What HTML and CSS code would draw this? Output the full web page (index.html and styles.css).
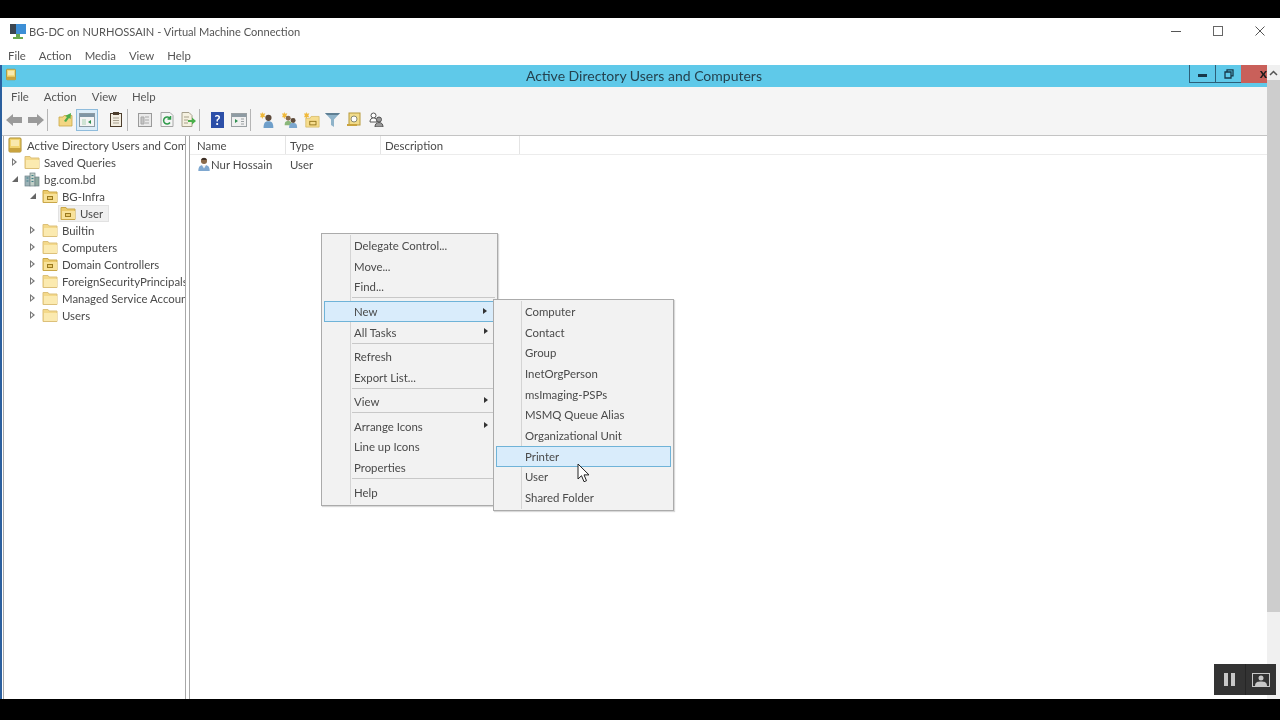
FILE: index.html
```html
<!DOCTYPE html>
<html lang="en">
<head>
    <meta charset="UTF-8">
    <title>BG-DC on NURHOSSAIN - Virtual Machine Connection</title>
    <link rel="stylesheet" href="styles.css">
</head>
<body>
    <svg class="sprite" width="0" height="0">
        <symbol id="folder" viewBox="0 0 16 16">
            <path d="M1 4V2.500h5L7 4h8v10.500H1z" fill="#f4d98a" stroke="#dcc07a" stroke-width="1"/>
            <path d="M2 6h13v8H2z" fill="#fbeab0"/>
        </symbol>
        <symbol id="ou" viewBox="0 0 16 16">
            <path d="M1 4V2.500h5L7 4h8v10.500H1z" fill="#eccb6c" stroke="#c9a748" stroke-width="1"/>
            <path d="M2 6h13v8H2z" fill="#f8e29a"/>
            <rect x="5" y="8" width="6" height="4" fill="#9a7a1f"/>
            <rect x="6" y="9" width="4" height="2" fill="#eccb6c"/>
        </symbol>
        <symbol id="book" viewBox="0 0 16 16">
            <rect x="2" y="1" width="12" height="14" rx="1" fill="#f2d46f" stroke="#a98a2b"/>
            <rect x="2" y="11" width="12" height="4" fill="#c9a33e"/>
            <rect x="4" y="3" width="8" height="6" fill="#f9e9ad"/>
        </symbol>
        <symbol id="domain" viewBox="0 0 16 16">
            <rect x="1" y="5" width="5" height="10" fill="#9db3b8" stroke="#6d8288" stroke-width=".7"/>
            <rect x="6" y="2" width="5" height="13" fill="#c2d0c8" stroke="#6d8288" stroke-width=".7"/>
            <rect x="11" y="6" width="4" height="9" fill="#8fa9a0" stroke="#6d8288" stroke-width=".7"/>
            <path d="M2.500 7h2M2.500 10h2M7.500 4.500h2M7.500 7.500h2M7.500 10.500h2" stroke="#3f7f86"/>
        </symbol>
        <symbol id="user" viewBox="0 0 16 16">
            <path d="M1.500 16c0-5.500 2-7 6.500-7s6.500 1.500 6.500 7z" fill="#7fa8d0"/>
            <path d="M5.500 9l2.500 4 2.500-4z" fill="#f4f4f4"/>
            <circle cx="8" cy="4.500" r="3.500" fill="#8a6a4a"/>
            <path d="M4.800 3.500c.8-3.500 5.600-3.500 6.400 0z" fill="#3d3027"/>
        </symbol>
        <symbol id="staruser" viewBox="0 0 18 18">
            <path d="M2.500 0l1 2 2.500-.5L4.800 4 6 6l-2.400-.3L2.500 8 1.700 5.700 0 6l1-2-1-2.500 1.800.5z" fill="#f0b93a"/>
            <path d="M4 18c0-6 2-7.500 5.500-7.500S15 12 15 18z" fill="#6f9fca"/>
            <circle cx="9.500" cy="6.500" r="3.500" fill="#5e4a3a"/>
        </symbol>
        <symbol id="stargroup" viewBox="0 0 18 18">
            <path d="M2.500 0l1 2 2.500-.5L4.800 4 6 6l-2.400-.3L2.500 8 1.700 5.700 0 6l1-2-1-2.500 1.800.5z" fill="#f0b93a"/>
            <path d="M3 15c0-4 1-5 4-5s4 1 4 5z" fill="#8ab77a"/>
            <path d="M8 18c0-4 1-5.500 4.500-5.500S17 14 17 18z" fill="#7ba7cf"/>
            <circle cx="7" cy="7" r="2.800" fill="#86694c"/>
            <circle cx="12.500" cy="9.500" r="2.800" fill="#5d4a3a"/>
        </symbol>
        <symbol id="starfolder" viewBox="0 0 18 18">
            <path d="M2.500 0l1 2 2.500-.5L4.800 4 6 6l-2.400-.3L2.500 8 1.700 5.700 0 6l1-2-1-2.500 1.800.5z" fill="#f0b93a"/>
            <path d="M2 7h5l1-2h9v12H2z" fill="#f6dd8e" stroke="#d3b45a" stroke-width=".8"/>
            <rect x="6" y="10" width="8" height="5" fill="#8f7118"/>
            <rect x="7" y="11" width="6" height="3" fill="#f6dd8e"/>
        </symbol>
    </svg>

    <div class="vm-window">
        <div class="vm-title">
            <svg class="vm-icon" width="16" height="15" viewBox="0 0 16 15">
                <rect x="0" y="0" width="16" height="10" fill="#3d8fd6"/>
                <rect x="0" y="0" width="6" height="10" fill="#3c4650"/>
                <rect x="6" y="10" width="4" height="3" fill="#6aa84f"/>
                <rect x="3" y="13" width="10" height="2" fill="#6aa84f"/>
            </svg>
            <span class="vm-title-text">BG-DC on NURHOSSAIN - Virtual Machine Connection</span>
            <div class="vm-caption">
                <svg class="cap-min" width="12" height="12" viewBox="0 0 12 12"><path d="M1 6.500h10" stroke="#555"/></svg>
                <svg class="cap-max" width="12" height="12" viewBox="0 0 12 12"><rect x="1.500" y="1.500" width="9" height="9" fill="none" stroke="#666"/></svg>
                <svg class="cap-close" width="12" height="12" viewBox="0 0 12 12"><path d="M1.500 1.500l9 9M10.500 1.500l-9 9" stroke="#555"/></svg>
            </div>
        </div>
        <div class="vm-menu">
            <span>File</span><span>Action</span><span>Media</span><span>View</span><span>Help</span>
        </div>

        <div class="desktop">
            <div class="app">
                <div class="app-title">
                    <svg class="app-icon" width="12" height="13"><use href="#book"/></svg>
                    <span class="app-title-text">Active Directory Users and Computers</span>
                    <div class="app-caption">
                        <div class="app-btn"><span class="min-bar"></span></div>
                        <div class="app-btn">
                            <svg width="10" height="10" viewBox="0 0 10 10"><path d="M3 2.500V.8h6v6H7.500M1 3h6v6H1z" fill="none" stroke="#18384a" stroke-width="1.300"/></svg>
                        </div>
                        <div class="app-close">x</div>
                    </div>
                </div>
                <div class="app-menu">
                    <span>File</span><span>Action</span><span>View</span><span>Help</span>
                </div>
                <div class="toolbar">
                    <div class="tool">
                        <svg width="16" height="12" viewBox="0 0 16 12"><path d="M0 6l7-6v3h9v6H7v3z" fill="#9a9a9a"/></svg>
                    </div>
                    <div class="tool">
                        <svg width="16" height="12" viewBox="0 0 16 12"><path d="M16 6L9 0v3H0v6h9v3z" fill="#9a9a9a"/></svg>
                    </div>
                    <div class="tool-sep"></div>
                    <div class="tool">
                        <svg width="15" height="15" viewBox="0 0 15 15"><path d="M1 5h4l1-1.500h8V14H1z" fill="#f3d683" stroke="#c9a748" stroke-width=".8"/><path d="M6 9l3-4-2-1 6-3-.5 6-1.500-1-3 4z" fill="#4fae4a"/></svg>
                    </div>
                    <div class="tool tool-active">
                        <svg width="16" height="14" viewBox="0 0 16 14"><rect x=".5" y=".5" width="15" height="13" fill="#f4f4f4" stroke="#8c9aa3"/><rect x="1" y="1" width="14" height="3" fill="#7f95a5"/><rect x="3" y="6" width="4" height="6" fill="#cfe3d4"/><path d="M12 7l-3 2 3 2z" fill="#2f8f4f"/></svg>
                    </div>
                    <div class="tool tool-gap">
                        <svg width="12" height="15" viewBox="0 0 12 15"><rect x=".5" y="1.500" width="11" height="13" fill="#f3eee2" stroke="#4c3d2c"/><rect x="3" y="0" width="6" height="3" fill="#4c3d2c"/><path d="M3 6h6M3 8.500h6M3 11h6" stroke="#a9a190"/></svg>
                    </div>
                    <div class="tool-sep"></div>
                    <div class="tool">
                        <svg width="14" height="14" viewBox="0 0 14 14"><rect x=".5" y=".5" width="13" height="13" fill="#eaeaea" stroke="#9a9a9a"/><path d="M3 4h3v7H3zM7 4h4M7 7h4M7 10h4" fill="#c4c4c4" stroke="#a8a8a8"/></svg>
                    </div>
                    <div class="tool">
                        <svg width="14" height="15" viewBox="0 0 14 15"><path d="M1 .5h9l3 3v11H1z" fill="#f5f5f5" stroke="#a6a6a6"/><path d="M10 10.500a3.500 3.500 0 1 1 0-4M10.500 4v3h-3" fill="none" stroke="#2f9a4a" stroke-width="1.500"/></svg>
                    </div>
                    <div class="tool tool-narrow">
                        <svg width="15" height="15" viewBox="0 0 15 15"><path d="M1 .5h7l3 3v11H1z" fill="#f5f1e0" stroke="#a6a08c"/><path d="M3 5h5M3 8h4M3 11h4" stroke="#a8a08a"/><path d="M7 8h4V5.500L15 9l-4 3.500V10H7z" fill="#49b04a"/></svg>
                    </div>
                    <div class="tool-sep"></div>
                    <div class="tool">
                        <svg width="13" height="16" viewBox="0 0 13 16"><rect width="13" height="16" fill="#2c4fa8"/><text x="6.500" y="13" class="help-mark">?</text></svg>
                    </div>
                    <div class="tool">
                        <svg width="16" height="14" viewBox="0 0 16 14"><rect x=".5" y=".5" width="15" height="13" fill="#f0f0f0" stroke="#9aa0a3"/><rect x="1" y="1" width="14" height="3" fill="#8e9ba3"/><path d="M4 6l3 2-3 2z" fill="#2f8f4f"/><path d="M10 6h3M10 8.500h3M10 11h3" stroke="#9aa0a3"/></svg>
                    </div>
                    <div class="tool-sep"></div>
                    <div class="tool">
                        <svg width="16" height="16"><use href="#staruser"/></svg>
                    </div>
                    <div class="tool">
                        <svg width="16" height="16"><use href="#stargroup"/></svg>
                    </div>
                    <div class="tool tool-narrow">
                        <svg width="16" height="16"><use href="#starfolder"/></svg>
                    </div>
                    <div class="tool tool-narrow">
                        <svg width="15" height="14" viewBox="0 0 15 14"><path d="M0 0h15L9 6.500V14l-3-2V6.500z" fill="#8fb3c9"/><path d="M0 0h15l-2 2H2z" fill="#5f7f93"/></svg>
                    </div>
                    <div class="tool">
                        <svg width="14" height="15" viewBox="0 0 14 15"><rect x="2" y="1" width="11" height="12" fill="#f1dc8c" stroke="#b8993a"/><rect x="0" y="12" width="10" height="2" fill="#c9a33e"/><circle cx="7" cy="7" r="3" fill="#fff" stroke="#8a8a70"/></svg>
                    </div>
                    <div class="tool">
                        <svg width="15" height="15" viewBox="0 0 15 15"><circle cx="4.500" cy="3.500" r="2.500" fill="#fff" stroke="#555"/><path d="M1 10c0-3 1.500-4 3.500-4S8 7 8 10z" fill="#fff" stroke="#555"/><circle cx="10" cy="7.500" r="2.500" fill="#9a9a9a" stroke="#555"/><path d="M6 15c0-3 1.500-4.500 4-4.500s4 1.500 4 4.500z" fill="#9a9a9a" stroke="#555"/></svg>
                    </div>
                </div>

                <div class="panes">
                    <div class="tree">
                        <div class="tree-row root-row"><svg class="tree-icon" width="16" height="16"><use href="#book"/></svg><span class="tree-label">Active Directory Users and Computers</span></div>
                        <div class="tree-row lvl1"><span class="arrow closed"></span><svg class="tree-icon" width="16" height="16"><use href="#folder"/></svg><span class="tree-label">Saved Queries</span></div>
                        <div class="tree-row lvl1"><span class="arrow open"></span><svg class="tree-icon" width="16" height="16"><use href="#domain"/></svg><span class="tree-label">bg.com.bd</span></div>
                        <div class="tree-row lvl2"><span class="arrow open"></span><svg class="tree-icon" width="16" height="16"><use href="#ou"/></svg><span class="tree-label">BG-Infra</span></div>
                        <div class="tree-row lvl3"><span class="tree-selected"><svg class="tree-icon" width="16" height="16"><use href="#ou"/></svg><span class="tree-label">User</span></span></div>
                        <div class="tree-row lvl2"><span class="arrow closed"></span><svg class="tree-icon" width="16" height="16"><use href="#folder"/></svg><span class="tree-label">Builtin</span></div>
                        <div class="tree-row lvl2"><span class="arrow closed"></span><svg class="tree-icon" width="16" height="16"><use href="#folder"/></svg><span class="tree-label">Computers</span></div>
                        <div class="tree-row lvl2"><span class="arrow closed"></span><svg class="tree-icon" width="16" height="16"><use href="#ou"/></svg><span class="tree-label">Domain Controllers</span></div>
                        <div class="tree-row lvl2"><span class="arrow closed"></span><svg class="tree-icon" width="16" height="16"><use href="#folder"/></svg><span class="tree-label">ForeignSecurityPrincipals</span></div>
                        <div class="tree-row lvl2"><span class="arrow closed"></span><svg class="tree-icon" width="16" height="16"><use href="#folder"/></svg><span class="tree-label">Managed Service Accounts</span></div>
                        <div class="tree-row lvl2"><span class="arrow closed"></span><svg class="tree-icon" width="16" height="16"><use href="#folder"/></svg><span class="tree-label">Users</span></div>
                    </div>
                    <div class="list">
                        <div class="list-head">
                            <div class="col col-name">Name</div>
                            <div class="col col-type">Type</div>
                            <div class="col col-desc">Description</div>
                        </div>
                        <div class="list-row">
                            <div class="cell-name"><svg width="14" height="16"><use href="#user"/></svg><span>Nur Hossain</span></div>
                            <div class="cell-type">User</div>
                        </div>
                    </div>
                </div>
            </div>
            <div class="scrollbar">
                <svg class="scroll-up" width="9" height="6" viewBox="0 0 9 6"><path d="M1 5l3.500-3.500L8 5" fill="none" stroke="#555" stroke-width="1.500"/></svg>
                <div class="scroll-thumb"></div>
            </div>
        </div>
    </div>

    <div class="menu menu-main">
        <div class="menu-item">Delegate Control...</div>
        <div class="menu-item">Move...</div>
        <div class="menu-item">Find...</div>
        <div class="menu-sep"></div>
        <div class="menu-item menu-hot has-sub">New</div>
        <div class="menu-item has-sub">All Tasks</div>
        <div class="menu-sep"></div>
        <div class="menu-item">Refresh</div>
        <div class="menu-item">Export List...</div>
        <div class="menu-sep"></div>
        <div class="menu-item has-sub">View</div>
        <div class="menu-sep"></div>
        <div class="menu-item has-sub">Arrange Icons</div>
        <div class="menu-item">Line up Icons</div>
        <div class="menu-item">Properties</div>
        <div class="menu-sep"></div>
        <div class="menu-item">Help</div>
    </div>

    <div class="menu menu-sub">
        <div class="menu-item">Computer</div>
        <div class="menu-item">Contact</div>
        <div class="menu-item">Group</div>
        <div class="menu-item">InetOrgPerson</div>
        <div class="menu-item">msImaging-PSPs</div>
        <div class="menu-item">MSMQ Queue Alias</div>
        <div class="menu-item">Organizational Unit</div>
        <div class="menu-item menu-hot">Printer</div>
        <div class="menu-item">User</div>
        <div class="menu-item">Shared Folder</div>
    </div>

    <svg class="cursor" width="13" height="20" viewBox="0 0 13 20">
        <path d="M1 1v15l3.500-3.300 2.500 6 2.500-1-2.500-5.800H12z" fill="#fff" stroke="#222"/>
    </svg>

    <div class="video-controls">
        <div class="video-btn">
            <span class="pause-bar"></span><span class="pause-bar"></span>
        </div>
        <div class="video-btn video-btn-right">
            <svg width="18" height="14" viewBox="0 0 18 14"><rect x=".5" y=".5" width="17" height="13" fill="none" stroke="#c8c8c8"/><circle cx="9" cy="5" r="2.500" fill="#c8c8c8"/><path d="M3 13c0-4 3-4.500 6-4.500s6 .5 6 4.500z" fill="#c8c8c8"/></svg>
        </div>
    </div>
</body>
</html>
```

FILE: styles.css
```css
* {
    box-sizing: border-box;
}
html, body {
    margin: 0;
    height: 720px;
    overflow: hidden;
}
body {
    position: relative;
    background-color: #000;
    font-family: Lato, "Noto Sans", Arial, sans-serif;
    font-size: 11.400px;
    color: #4a4a4a;
    padding: 18px 0 21px;
    filter: blur(0.35px);
}
.sprite {
    position: absolute;
}
.vm-window {
    height: 681px;
    background-color: #fff;
    display: flex;
    flex-direction: column;
}
.vm-title {
    height: 26px;
    display: flex;
    align-items: center;
    padding-left: 10px;
}
.vm-icon {
    margin-right: 3px;
}
.vm-title-text {
    font-size: 11.100px;
    color: #555;
    padding-top: 1px;
}
.vm-caption {
    margin-left: auto;
    display: flex;
    gap: 30px;
    padding-right: 14px;
}
.vm-menu {
    height: 21px;
    display: flex;
    align-items: center;
    gap: 13px;
    padding: 1px 0 0 8px;
    color: #555;
}
.desktop {
    flex: 1;
    display: flex;
    min-height: 0;
    border-left: 2px solid #2b5f9e;
}
.app {
    flex: 1;
    display: flex;
    flex-direction: column;
    min-width: 0;
}
.app-title {
    position: relative;
    height: 22px;
    background-color: #5fc9e9;
    display: flex;
    align-items: center;
    justify-content: center;
    padding: 0 0 2px 19px;
}
.app-icon {
    position: absolute;
    left: 3px;
    top: 3px;
}
.app-title-text {
    font-size: 14px;
    color: #25424f;
}
.app-caption {
    position: absolute;
    right: 0;
    top: 0;
    height: 18px;
    display: flex;
}
.app-btn {
    width: 26px;
    height: 18px;
    border: 1px solid #2d5f78;
    border-top: none;
    border-right: none;
    display: flex;
    align-items: center;
    justify-content: center;
}
.min-bar {
    width: 9px;
    height: 3px;
    margin-top: 3px;
    background-color: #18384a;
}
.app-close {
    width: 26px;
    height: 18px;
    background-color: #c9605a;
    color: #1c1c1c;
    font-weight: bold;
    font-size: 14px;
    line-height: 15px;
    text-align: right;
}
.app-menu {
    height: 19px;
    background-color: #f5f5f5;
    display: flex;
    align-items: center;
    gap: 15px;
    padding-left: 9px;
    color: #555;
}
.toolbar {
    height: 30px;
    background-color: #f5f5f5;
    border-bottom: 1px solid #c4c4c4;
    display: flex;
    align-items: center;
    padding: 0 0 2px 1px;
}
.tool {
    width: 22px;
    height: 22px;
    display: flex;
    align-items: center;
    justify-content: center;
    flex: none;
}
.tool-active {
    background-color: #dcecf8;
    border: 1px solid #8fbcdc;
}
.tool-gap {
    margin-left: 7px;
}
.tool-narrow {
    width: 21px;
}
.tool-sep {
    width: 1px;
    height: 22px;
    margin-right: 6px;
    background-color: #b5b5b5;
    flex: none;
}
.help-mark {
    fill: #fff;
    font-size: 13px;
    font-weight: bold;
    text-anchor: middle;
}
.panes {
    flex: 1;
    display: flex;
    min-height: 0;
}
.tree {
    width: 183px;
    margin-left: 1px;
    border-left: 1px solid #a8a8a8;
    border-right: 1px solid #a8a8a8;
    background-color: #fff;
    overflow: hidden;
}
.tree-row {
    height: 17px;
    display: flex;
    align-items: center;
    white-space: nowrap;
    padding: 1px 0 0 3px;
}
.tree-row.lvl1 {
    padding-left: 6px;
}
.tree-row.lvl2 {
    padding-left: 24px;
}
.tree-row.lvl3 {
    padding-left: 54px;
}
.arrow {
    width: 10px;
    height: 10px;
    margin-right: 4px;
    flex: none;
    position: relative;
}
.arrow.closed::before {
    content: "";
    position: absolute;
    left: 2px;
    top: 1px;
    border-left: 5px solid #777;
    border-top: 4px solid transparent;
    border-bottom: 4px solid transparent;
}
.arrow.closed::after {
    content: "";
    position: absolute;
    left: 3px;
    top: 3px;
    border-left: 2.500px solid #fff;
    border-top: 2px solid transparent;
    border-bottom: 2px solid transparent;
}
.arrow.open::before {
    content: "";
    position: absolute;
    left: 2px;
    top: 2px;
    border-right: 6px solid #666;
    border-top: 6px solid transparent;
}
.tree-icon {
    flex: none;
}
.tree-label {
    margin-left: 4px;
    min-width: 0;
    overflow: hidden;
}
.tree-selected {
    display: flex;
    align-items: center;
    height: 17px;
    padding: 0 5px 0 1px;
    background-color: #f0f0f0;
    border: 1px solid #e2e2e2;
}
.list {
    flex: 1;
    margin-left: 3px;
    background-color: #fff;
    border-left: 1px solid #a8a8a8;
}
.list-head {
    height: 19px;
    display: flex;
    align-items: center;
    border-bottom: 1px solid #ececec;
}
.col {
    height: 100%;
    display: flex;
    align-items: center;
    border-right: 1px solid #e4e4e4;
    padding: 1px 0 0 7px;
}
.col-name {
    width: 96px;
}
.col-type {
    width: 95px;
    padding-left: 4px;
}
.col-desc {
    width: 139px;
    padding-left: 4px;
}
.list-row {
    height: 18px;
    display: flex;
    align-items: center;
}
.cell-name {
    width: 96px;
    padding-left: 7px;
    display: flex;
    align-items: center;
}
.cell-type {
    padding-left: 4px;
}
.scrollbar {
    width: 13px;
    background-color: #f0f0f0;
    display: flex;
    flex-direction: column;
    align-items: center;
}
.scroll-up {
    margin: 5px 0 4px;
}
.scroll-thumb {
    width: 100%;
    height: 532px;
    background-color: #cdcdcd;
}
.menu {
    position: absolute;
    background-color: #f2f2f2;
    border: 1px solid #ababab;
    box-shadow: 1px 1px 1px rgba(0, 0, 0, 0.15);
    padding: 1px 2px;
}
.menu::before {
    content: "";
    position: absolute;
    top: 1px;
    bottom: 1px;
    width: 1px;
    background-color: #d4d4d4;
}
.menu-main {
    left: 321px;
    top: 233px;
    width: 177px;
    height: 273px;
}
.menu-main::before {
    left: 28px;
}
.menu-main .menu-item {
    height: 20.800px;
    padding-left: 30px;
}
.menu-sub {
    left: 493px;
    top: 299px;
    width: 181px;
    height: 212px;
}
.menu-sub::before {
    left: 27px;
}
.menu-sub .menu-item {
    padding-left: 29px;
}
.menu-item {
    position: relative;
    height: 20.700px;
    display: flex;
    align-items: center;
    white-space: nowrap;
}
.has-sub::after {
    content: "";
    position: absolute;
    right: 7px;
    top: 6px;
    border-left: 4px solid #333;
    border-top: 3px solid transparent;
    border-bottom: 3px solid transparent;
}
.menu-main .menu-hot {
    background-color: #d9ecfb;
    border: 1px solid #6fb3d8;
    padding-left: 29px;
}
.menu-sub .menu-hot {
    background-color: #d9ecfb;
    border: 1px solid #6fb3d8;
    padding-left: 28px;
}
.menu-sep {
    height: 3.600px;
    margin-left: 28px;
    border-top: 1px solid #c8c8c8;
}
.cursor {
    position: absolute;
    left: 577px;
    top: 463px;
}
.video-controls {
    position: absolute;
    left: 1214px;
    top: 664px;
    height: 31px;
    display: flex;
    background-color: #333;
}
.video-btn {
    width: 31px;
    display: flex;
    align-items: center;
    justify-content: center;
    gap: 3px;
}
.video-btn-right {
    border-left: 1px solid #262626;
}
.pause-bar {
    width: 4px;
    height: 13px;
    background-color: #c8c8c8;
}
```
